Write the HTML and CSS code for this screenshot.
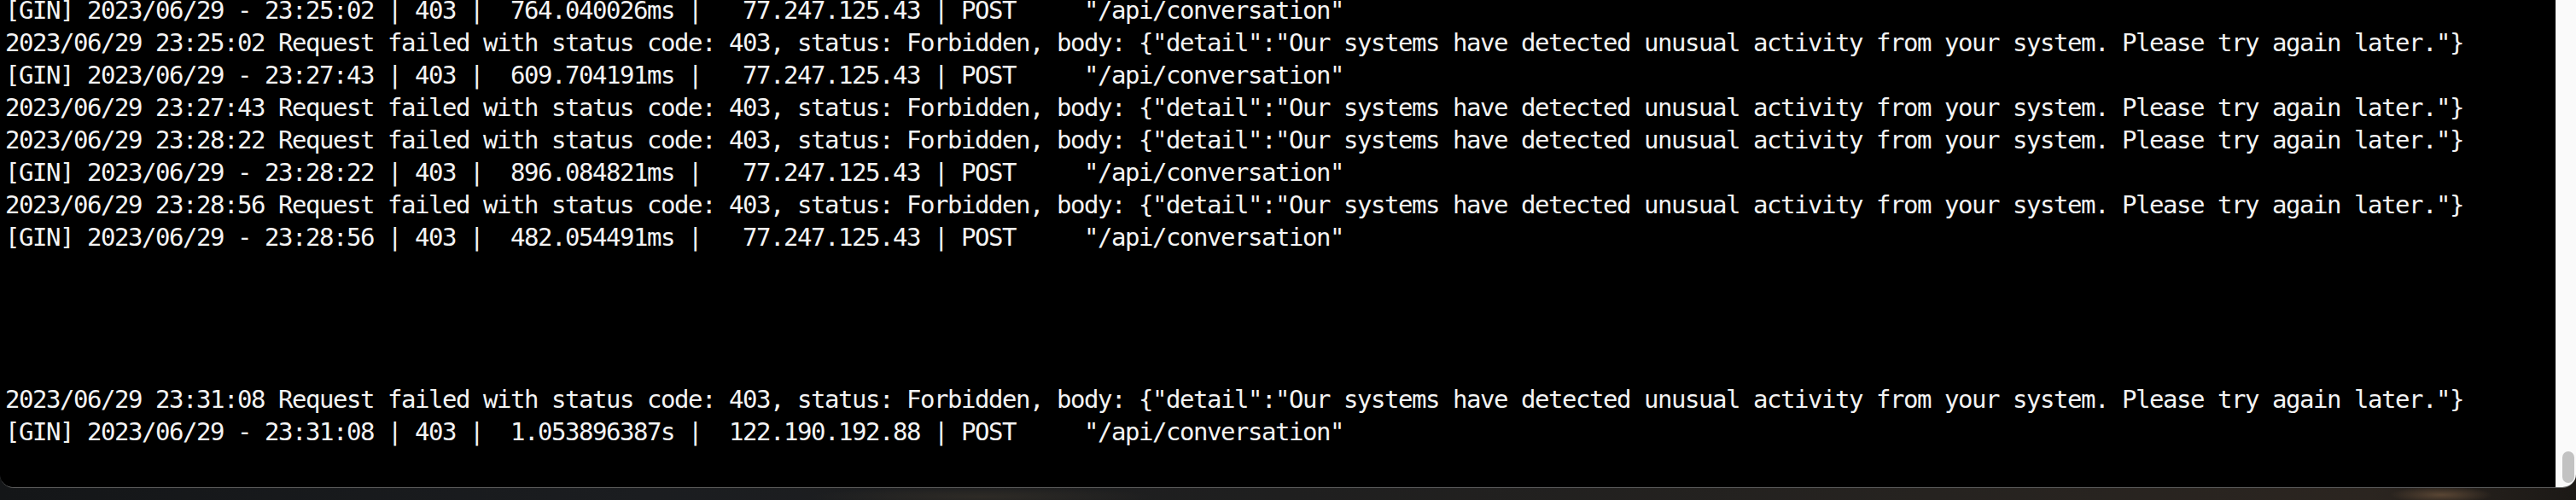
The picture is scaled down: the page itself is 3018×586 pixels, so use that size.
FILE: index.html
```html
<!DOCTYPE html>
<html lang="en">
<head>
  <meta charset="UTF-8" />
  <title>gin log</title>
  <link rel="stylesheet" href="styles.css">
</head>
<body>

<div class="window">
  <div class="terminal">
<pre class="log">[GIN] 2023/06/29 - 23:25:02 | 403 |  764.040026ms |   77.247.125.43 | POST     "/api/conversation"
2023/06/29 23:25:02 Request failed with status code: 403, status: Forbidden, body: {"detail":"Our systems have detected unusual activity from your system. Please try again later."}
[GIN] 2023/06/29 - 23:27:43 | 403 |  609.704191ms |   77.247.125.43 | POST     "/api/conversation"
2023/06/29 23:27:43 Request failed with status code: 403, status: Forbidden, body: {"detail":"Our systems have detected unusual activity from your system. Please try again later."}
2023/06/29 23:28:22 Request failed with status code: 403, status: Forbidden, body: {"detail":"Our systems have detected unusual activity from your system. Please try again later."}
[GIN] 2023/06/29 - 23:28:22 | 403 |  896.084821ms |   77.247.125.43 | POST     "/api/conversation"
2023/06/29 23:28:56 Request failed with status code: 403, status: Forbidden, body: {"detail":"Our systems have detected unusual activity from your system. Please try again later."}
[GIN] 2023/06/29 - 23:28:56 | 403 |  482.054491ms |   77.247.125.43 | POST     "/api/conversation"




2023/06/29 23:31:08 Request failed with status code: 403, status: Forbidden, body: {"detail":"Our systems have detected unusual activity from your system. Please try again later."}
[GIN] 2023/06/29 - 23:31:08 | 403 |  1.053896387s |  122.190.192.88 | POST     "/api/conversation"</pre>
  </div>
  <div class="scrollbar">
    <div class="thumb"></div>
  </div>
</div>

</body>
</html>
```

FILE: styles.css
```css
:root {
  --term-bg: #000;
  --term-fg: #f4f4f4;
  --track: #fafafa;
  --thumb: #c2c2c2;
}

* {
  box-sizing: border-box;
  margin: 0;
  padding: 0;
}

body {
  width: 3018px;
  height: 586px;
  overflow: hidden;
  background:
    radial-gradient(ellipse 60px 10px at 2860px 580px, #5a4634 0%, rgba(90,70,52,0) 100%),
    radial-gradient(ellipse 200px 12px at 1150px 582px, #2e2b26 0%, rgba(46,43,38,0) 100%),
    linear-gradient(90deg, #141618 0%, #1b1d20 25%, #1f1f1f 50%, #262320 75%, #2b2520 92%, #1c1916 100%);
}

.window {
  display: flex;
  height: 572px;
  border-bottom: 1px solid #5e5e5e;
  border-radius: 0 0 16px 16px;
  overflow: hidden;
}

.terminal {
  flex: 1;
  background: var(--term-bg);
  overflow: hidden;
}

.log {
  margin-top: -7px;
  padding-left: 6px;
  font-family: "DejaVu Sans Mono", monospace;
  font-size: 29px;
  letter-spacing: -1.46px;
  line-height: 38px;
  color: var(--term-fg);
  white-space: pre;
}

.scrollbar {
  width: 24px;
  display: flex;
  flex-direction: column;
  background: var(--track);
  border-left: 1px solid #ececec;
}

.thumb {
  margin: auto 2px 5px auto;
  width: 14px;
  height: 37px;
  border-radius: 7px;
  background: var(--thumb);
}
```
